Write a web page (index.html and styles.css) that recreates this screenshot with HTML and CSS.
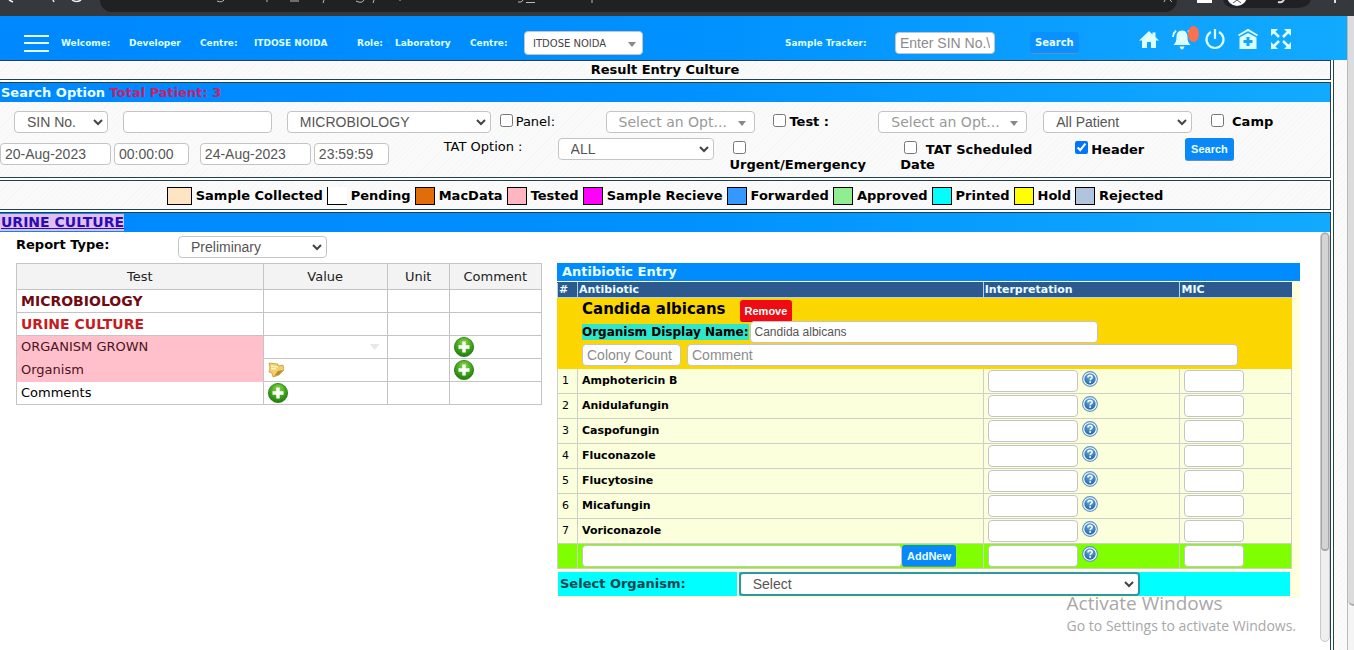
FILE: index.html
```html
<!DOCTYPE html>
<html lang="en">
<head>
<meta charset="utf-8">
<title>Result Entry Culture</title>
<link rel="stylesheet" href="styles.css">
</head>
<body>
<svg class="defs" aria-hidden="true">
  <defs>
    <radialGradient id="gGreen" cx=".5" cy=".3" r=".75"><stop offset="0" stop-color="#8fdc4a"/><stop offset=".5" stop-color="#43a81c"/><stop offset="1" stop-color="#1c7508"/></radialGradient>
    <radialGradient id="gBlue" cx=".5" cy=".25" r=".8"><stop offset="0" stop-color="#6fb0e4"/><stop offset="1" stop-color="#1b5f9e"/></radialGradient>
  </defs>
  <symbol id="add" viewBox="0 0 20 20"><circle cx="10" cy="10" r="9.6" fill="url(#gGreen)" stroke="#1f7a10" stroke-width=".8"/><path d="M8.3 4.5h3.4v3.8h3.8v3.4h-3.8v3.8H8.3v-3.8H4.5V8.300h3.800z" fill="#fff"/></symbol>
  <symbol id="help" viewBox="0 0 16 16"><circle cx="8" cy="8" r="7.400" fill="#fff" stroke="#5b93c4" stroke-width="1.100"/><circle cx="8" cy="8" r="5.700" fill="url(#gBlue)"/><path d="M5.900 6.400c0-2.600 4.300-2.600 4.300-.2 0 1.500-2 1.500-2 3" fill="none" stroke="#fff" stroke-width="1.500"/><rect x="7.300" y="10.200" width="1.700" height="1.600" fill="#fff"/></symbol>
  <symbol id="note" viewBox="0 0 16 16"><path d="M1 1l9 1v2l5-1 1 5-5 5-6 2-1-4-3-1 1-4z" fill="#f3cf6b" stroke="#c79a35" stroke-width=".8"/><path d="M3 4l7 1M3 6.500l5 .5" stroke="#fff3c4" stroke-width="1.400"/><path d="M15 8l-5 1-4 5 5-1.500z" fill="#b88a35"/></symbol>
</svg>

<div class="browser">
  <svg class="browser-left" viewBox="0 0 100 16" aria-hidden="true"><path d="M9 0l4 2M53 0l1 2M72 0q4 3 9 0" stroke="#eee" stroke-width="1.500" fill="none"/></svg>
  <div class="address">
    <svg viewBox="0 0 560 16" width="560" height="16" aria-hidden="true"><path d="M117 1q5 2 7-1M167 0v2M190 1h9M224 0l-1 3M256 1q6 3 8-1M274 0l-1 3M300 0v1M418 2q4 1 5-2M426 2.500h9M492 0v3" stroke="#bbb" stroke-width="1" fill="none"/></svg>
    <svg class="star" viewBox="0 0 16 16" width="16" height="16" aria-hidden="true"><path d="M4 0l-1 2M9 0l2 2" stroke="#bbb"/></svg>
  </div>
  <svg class="browser-right" viewBox="0 0 177 16" aria-hidden="true"><path d="M20 0h15v3H20z" fill="#fff"/><path d="M46 0h88q-3 8-14 8H58q-10 0-12-8z" fill="#202124"/><circle cx="60" cy="-4" r="10" fill="#fff"/><path d="M56 3l4-3 4 3" stroke="#555" fill="none"/><path d="M101 2q4 1 6-2M158 0v3" stroke="#ddd" stroke-width="2" fill="none"/></svg>
</div>

<div class="viewport">
<div class="page">
  <header class="topbar">
    <button class="menu" aria-label="Menu"><span></span><span></span><span></span></button>
    <span>Welcome:</span><span>Developer</span><span>Centre:</span><span>ITDOSE NOIDA</span><span>Role:</span><span>Laboratory</span>
    <label for="centre">Centre:</label>
    <div><select id="centre" class="chosen chosen-small"><option>ITDOSE NOIDA</option></select></div>
    <label for="tracker">Sample Tracker:</label>
    <div><input id="tracker" class="field tracker" type="text" placeholder="Enter SIN No.\Barcode"></div>
    <div><button class="btn btn-top">Search</button></div>
    <nav class="icons">
      <a href="#" aria-label="Home"><svg viewBox="0 0 22 22"><path d="M11 3L1 12.500h3V20h5v-6h4v6h5v-7.500h3L17.500 9V4.500h-3v2z" fill="currentColor"/></svg></a>
      <a href="#" class="bell" aria-label="Notifications"><svg viewBox="0 0 22 22"><path d="M11 2.500c-4 0-5.500 3-5.500 6.500 0 4-1 6-3 8h17c-2-2-3-4-3-8 0-3.500-1.500-6.500-5.500-6.500zM8.500 18.500h5q-1 3-2.500 3t-2.500-3z" fill="currentColor"/><path d="M2 9q.2-4 3-6.500M20 9q-.2-4-3-6.500" stroke="currentColor" stroke-width="1.800" fill="none"/></svg><i class="badge"></i></a>
      <a href="#" aria-label="Log out"><svg viewBox="0 0 22 22"><path d="M7 4a8.500 8.500 0 1 0 8 0M11 1v10" stroke="currentColor" stroke-width="2.200" fill="none"/></svg></a>
      <a href="#" aria-label="Hospital"><svg viewBox="0 0 22 22"><path d="M1.500 7.500L11 2l9.500 5.500" stroke="currentColor" stroke-width="2" fill="none"/><path fill-rule="evenodd" d="M2.500 9.500L11 5l8.500 4.500V21h-17zM9.500 9v3h-3v3h3v3h3v-3h3v-3h-3V9z" fill="currentColor"/></svg></a>
      <a href="#" aria-label="Full screen"><svg viewBox="0 0 22 22"><path d="M4 4l5 5M18 4l-5 5M4 18l5-5M18 18l-5-5" stroke="currentColor" stroke-width="2.600"/><path d="M1 1h7L1 8zM21 1h-7l7 7zM1 21h7l-7-7zM21 21h-7l7-7z" fill="currentColor"/></svg></a>
    </nav>
  </header>

  <main class="content">
    <h1 class="box title">Result Entry Culture</h1>

    <section class="box search">
      <h2 class="bar">Search Option <span class="total">Total Patient: 3</span></h2>
      <div class="row row-one">
        <div><select class="field w-sin" aria-label="Search by"><option>SIN No.</option></select></div>
        <div><input class="field w-mid" type="text" aria-label="Search value"></div>
        <div><select class="field w-dept" aria-label="Department"><option>MICROBIOLOGY</option></select></div>
        <label class="check plain"><input type="checkbox">Panel:</label>
        <div><select class="chosen" aria-label="Panel"><option>Select an Opt...</option></select></div>
        <label class="check"><input type="checkbox">Test :</label>
        <div><select class="chosen" aria-label="Test"><option>Select an Opt...</option></select></div>
        <div><select class="field w-mid" aria-label="Patient"><option>All Patient</option></select></div>
        <label class="check spaced"><input type="checkbox">Camp</label>
      </div>
      <div class="row row-two">
        <div class="dates">
          <input class="field w-date" type="text" value="20-Aug-2023" aria-label="From date"><input class="field w-time" type="text" value="00:00:00" aria-label="From time">
        </div>
        <div class="dates">
          <input class="field w-date" type="text" value="24-Aug-2023" aria-label="To date"><input class="field w-time" type="text" value="23:59:59" aria-label="To time">
        </div>
        <label class="tat" for="tat">TAT Option :</label>
        <div><select id="tat" class="field w-tat"><option>ALL</option></select></div>
        <label class="wrapcheck urgent"><input type="checkbox"><br>Urgent/Emergency</label>
        <label class="wrapcheck tatdate"><input type="checkbox"> TAT Scheduled Date</label>
        <label class="wrapcheck"><input type="checkbox" checked>Header</label>
        <div><button class="btn">Search</button></div>
      </div>
    </section>

    <ul class="box legend">
      <li><i class="sw wide c-collected"></i>Sample Collected</li>
      <li><i class="sw c-pending"></i>Pending</li>
      <li><i class="sw c-mac"></i>MacData</li>
      <li><i class="sw c-tested"></i>Tested</li>
      <li><i class="sw c-receive"></i>Sample Recieve</li>
      <li><i class="sw c-forward"></i>Forwarded</li>
      <li><i class="sw c-approved"></i>Approved</li>
      <li><i class="sw c-printed"></i>Printed</li>
      <li><i class="sw c-hold"></i>Hold</li>
      <li><i class="sw c-rejected"></i>Rejected</li>
    </ul>

    <section class="box results">
      <h2 class="bar"><a href="#" class="culture">URINE CULTURE</a></h2>
      <div class="scroller">
        <div class="panes">
          <div class="left">
            <div class="report"><label for="report">Report Type:</label><select id="report" class="field w-mid"><option>Preliminary</option></select></div>
            <table class="tests">
              <colgroup><col class="t1"><col class="t2"><col class="t3"><col class="t4"></colgroup>
              <thead><tr><th>Test</th><th>Value</th><th>Unit</th><th>Comment</th></tr></thead>
              <tbody>
                <tr><td class="dept">MICROBIOLOGY</td><td></td><td></td><td></td></tr>
                <tr><td class="group">URINE CULTURE</td><td></td><td></td><td></td></tr>
                <tr><td class="pink">ORGANISM GROWN</td><td class="drop"><i></i></td><td></td><td><svg class="add"><use href="#add"/></svg></td></tr>
                <tr><td class="pink">Organism</td><td><svg class="note"><use href="#note"/></svg></td><td></td><td><svg class="add"><use href="#add"/></svg></td></tr>
                <tr><td>Comments</td><td><svg class="add"><use href="#add"/></svg></td><td></td><td></td></tr>
              </tbody>
            </table>
          </div>
          <div class="right">
            <h3 class="bar antibar">Antibiotic Entry</h3>
            <div class="entry">
              <table class="anti">
                <colgroup><col class="a1"><col class="a2"><col class="a3"><col class="a4"></colgroup>
                <thead><tr><th>#</th><th>Antibiotic</th><th>Interpretation</th><th>MIC</th></tr></thead>
                <tbody>
                  <tr class="gold"><td></td><td colspan="3">
                    <div class="org"><span>Candida albicans</span><button class="btn remove">Remove</button></div>
                    <div class="org second"><label class="disp" for="disp">Organism Display Name:</label><input id="disp" class="field name" type="text" value="Candida albicans"></div>
                    <div class="org gap"><input class="field colony" type="text" placeholder="Colony Count" aria-label="Colony Count"><input class="field comment" type="text" placeholder="Comment" aria-label="Comment"></div>
                  </td></tr>
                  <tr><td>1</td><th>Amphotericin B</th><td><div class="cell"><input class="field interp" aria-label="Interpretation"><svg class="help"><use href="#help"/></svg></div></td><td><input class="field mic" aria-label="MIC"></td></tr>
                  <tr><td>2</td><th>Anidulafungin</th><td><div class="cell"><input class="field interp" aria-label="Interpretation"><svg class="help"><use href="#help"/></svg></div></td><td><input class="field mic" aria-label="MIC"></td></tr>
                  <tr><td>3</td><th>Caspofungin</th><td><div class="cell"><input class="field interp" aria-label="Interpretation"><svg class="help"><use href="#help"/></svg></div></td><td><input class="field mic" aria-label="MIC"></td></tr>
                  <tr><td>4</td><th>Fluconazole</th><td><div class="cell"><input class="field interp" aria-label="Interpretation"><svg class="help"><use href="#help"/></svg></div></td><td><input class="field mic" aria-label="MIC"></td></tr>
                  <tr><td>5</td><th>Flucytosine</th><td><div class="cell"><input class="field interp" aria-label="Interpretation"><svg class="help"><use href="#help"/></svg></div></td><td><input class="field mic" aria-label="MIC"></td></tr>
                  <tr><td>6</td><th>Micafungin</th><td><div class="cell"><input class="field interp" aria-label="Interpretation"><svg class="help"><use href="#help"/></svg></div></td><td><input class="field mic" aria-label="MIC"></td></tr>
                  <tr><td>7</td><th>Voriconazole</th><td><div class="cell"><input class="field interp" aria-label="Interpretation"><svg class="help"><use href="#help"/></svg></div></td><td><input class="field mic" aria-label="MIC"></td></tr>
                  <tr class="green"><td></td><td><div class="cell"><input class="field newname" aria-label="New antibiotic"><button class="btn addnew">AddNew</button></div></td><td><div class="cell"><input class="field interp" aria-label="Interpretation"><svg class="help"><use href="#help"/></svg></div></td><td><input class="field mic" aria-label="MIC"></td></tr>
                </tbody>
              </table>
              <div class="select-org"><label for="organism">Select Organism:</label><div><select id="organism" class="field"><option>Select</option></select></div></div>
            </div>
          </div>
        </div>
        <div class="innerbar"><i></i></div>
      </div>
    </section>
  </main>
</div>
<div class="pagebar"><i></i></div>
</div>
<aside class="watermark"><strong>Activate Windows</strong><span>Go to Settings to activate Windows.</span></aside>
</body>
</html>
```
FILE: styles.css
```css
* { box-sizing: border-box; }
html, body { height: 100%; }
body {
  margin: 0;
  display: flex;
  flex-direction: column;
  overflow: hidden;
  position: relative;
  font: 13px/16px "DejaVu Sans", Verdana, sans-serif;
  color: #000;
  background: #fff;
}
h1, h2, h3, ul { margin: 0; padding: 0; font-size: 13px; }
i { display: block; font-style: normal; }
svg { display: block; }
.defs { position: absolute; width: 0; height: 0; }

/* browser chrome */
.browser { display: flex; height: 16px; background: #35393d; flex: none; overflow: hidden; }
.browser-left { width: 100px; height: 16px; }
.browser-right { width: 177px; height: 16px; }
.address { flex: 1; display: flex; justify-content: space-between; height: 12px; background: #202123; border-radius: 0 0 14px 14px; overflow: hidden; }

/* page frame */
.viewport { flex: 1; display: flex; min-height: 0; }
.page {
  flex: 1;
  min-width: 0;
  display: flex;
  flex-direction: column;
  background: repeating-linear-gradient(135deg, #fafafa 0 3px, #f6f7f7 3px 4px);
}
.pagebar { width: 7px; flex: none; background: #f4f4f4; border-left: 1px solid #b9b9b9; }
.pagebar i { height: 93%; background: #dcdcdc; border-radius: 0 0 0 6px; border-bottom: 2px solid #aaa; }

.topbar {
  flex: none;
  height: 44px;
  padding: 10px 0 0 24px;
  display: grid;
  grid-template-columns: 37fr 68fr 71fr 54fr 103fr 38fr 75fr 54fr 261fr 110fr 135fr 108fr 209fr;
  align-items: center;
  color: #dcffff;
  font-weight: bold;
  font-size: 9px;
  line-height: 14px;
  white-space: nowrap;
  background: linear-gradient(90deg, #0088ff 0%, #0090ff 50%, #12aaff 100%);
}
.topbar > * { min-width: 0; }
.menu { width: 25px; height: 17px; padding: 0; border: 0; background: none; display: flex; flex-direction: column; justify-content: space-between; }
.menu span { height: 2px; background: #e4ffff; }
.icons { display: flex; gap: 11px; padding-bottom: 8px; }
.icons a { color: #dcffff; position: relative; }
.icons svg { width: 22px; height: 22px; }
.badge { position: absolute; right: -6px; top: -2px; width: 11px; height: 16px; border-radius: 50%; background: #f9714f; }

.content {
  flex: 1;
  min-height: 0;
  margin-right: 13px;
  padding-right: 2px;
  border-right: 1px solid #1d4d33;
  background: #fff;
  display: flex;
  flex-direction: column;
  gap: 2px;
}
.box {
  border: solid #23404c;
  border-width: 1px 1px 1px 0;
  background: repeating-linear-gradient(135deg, #fafafa 0 3px, #f6f7f7 3px 4px);
}
.title { text-align: center; height: 20px; line-height: 18px; flex: none; }
.bar { height: 19px; line-height: 19px; padding-left: 1px; color: #e8ffff; background: linear-gradient(90deg, #0088ff 0%, #0090ff 50%, #12aaff 100%); }
.total { color: #c8206c; font-weight: bold; }

/* controls */
.field, .chosen {
  font: 14px "Liberation Sans", Arial, sans-serif;
  color: #555;
  height: 22px;
  border: 1px solid #c4c4c4;
  border-radius: 4px;
  background-color: #fff;
  padding: 0 4px;
  display: block;
}
select.field, .chosen {
  appearance: none;
  padding: 0 20px 0 12px;
  background-repeat: no-repeat;
  background-position: right 4px center;
  background-image: url("data:image/svg+xml,%3Csvg xmlns='http://www.w3.org/2000/svg' width='10' height='8'%3E%3Cpath d='M1 2l4 4 4-4' fill='none' stroke='%23444' stroke-width='2'/%3E%3C/svg%3E");
}
.chosen {
  width: 149px;
  font: 14px "DejaVu Sans", Verdana, sans-serif;
  color: #999;
  background-position: right 7px center;
  background-image: url("data:image/svg+xml,%3Csvg xmlns='http://www.w3.org/2000/svg' width='10' height='7'%3E%3Cpath d='M1 2h8L5 7z' fill='%23888'/%3E%3C/svg%3E");
}
.chosen-small { width: 119px; height: 24px; font-size: 10px; color: #444; padding: 0 0 0 8px; background-position: right 5px center; }
.field::placeholder { color: #8c8c8c; opacity: 1; }
.tracker { width: 100px; }
.w-sin { width: 94px; }
.w-mid { width: 149px; }
.w-dept { width: 204px; }
.w-date { width: 111px; }
.w-time { width: 75px; }
.w-tat { width: 156px; }
.btn {
  font: bold 11px "Liberation Sans", Arial, sans-serif;
  color: #e8ffff;
  background: #0a88f8;
  border: 0;
  border-bottom: 1px solid #6a8fb0;
  border-radius: 3px;
  padding: 0 5px;
  height: 22px;
}
.btn-top { font: bold 10px "DejaVu Sans", sans-serif; background: #0a90ff; }

/* search panel */
.search { flex: none; height: 96px; }
.row { display: grid; }
.row > * { min-width: 0; }
.row-one { grid-template-columns: 109fr 164fr 213fr 106fr 168fr 105fr 165fr 168fr 119fr; padding: 9px 0 0 14px; height: 36px; }
.row-two { grid-template-columns: 200fr 244fr 114fr 172fr 171fr 175fr 110fr 145fr; }
.row-two .btn { height: 23px; padding: 0 6px; }
.dates { display: flex; gap: 3px; padding-top: 5px; }
.check, .wrapcheck { font-weight: bold; }
.plain { font-weight: normal; }
.check { display: flex; gap: 3px; line-height: 22px; }
.spaced { gap: 8px; }
input[type="checkbox"] { width: 13px; height: 13px; margin: 3px 0 0; }
.wrapcheck { line-height: 15px; }
.wrapcheck input { vertical-align: 0; margin-right: 3px; }
.urgent input { margin-left: 4px; }
.tatdate { padding-right: 24px; }
.tatdate input { margin: 3px 4px 0; }
.tat { line-height: 18px; }

.legend { flex: none; height: 30px; display: flex; justify-content: center; align-items: center; gap: 4px; padding-top: 2px; list-style: none; font-weight: bold; }
.legend li { display: flex; align-items: center; gap: 4px; white-space: nowrap; }
.sw { width: 20px; height: 18px; border: 1px solid #000; }
.wide { width: 25px; }
.c-collected { background: #ffe4c4; }
.c-pending { background: #fff; border-width: 0 0 1px 1px; }
.c-mac { background: #e06c0a; }
.c-tested { background: #ffb6c1; }
.c-receive { background: #f0f; }
.c-forward { background: #3399ff; }
.c-approved { background: #90ee90; }
.c-printed { background: #0ff; }
.c-hold { background: #ff0; }
.c-rejected { background: #b0c4de; }

/* results */
.results { flex: 1; min-height: 0; display: flex; flex-direction: column; border-bottom: 0; background: #fff; }
.culture { display: inline-block; margin-left: -1px; padding-left: 1px; font-size: 14px; line-height: 17px; color: #2a0cb4; background: #e0bff0; }
.results .bar { flex: none; }
.scroller { flex: 1; min-height: 0; display: flex; }
.panes { flex: 1; min-width: 0; display: grid; grid-template-columns: 526fr 743fr; gap: 15px; padding: 4px 20px 0 16px; align-items: start; }
.innerbar { width: 10px; flex: none; margin-bottom: 8px; background: #efefef; border: 1px solid #c8c8c8; border-radius: 5px; }
.innerbar i { height: 78%; background: #d4d4d4; border-radius: 5px; border: solid #a6a6a6; border-width: 1px 1px 2px; }
.report { display: grid; grid-template-columns: 162fr 364fr; font-weight: bold; line-height: 18px; height: 27px; }
table { border-collapse: collapse; width: 100%; table-layout: fixed; }
.tests td, .tests th { border: 1px solid #c4c4c4; padding: 0 4px; height: 23px; }
.tests th { font-weight: normal; background: #f3f3f3; color: #222; height: 26px; }
.t1 { width: 47%; } .t2 { width: 23.600%; } .t3 { width: 11.800%; } .t4 { width: 17.600%; }
.tests .dept { color: #700a12; font-weight: bold; font-size: 14px; }
.tests .group { color: #c41c20; font-weight: bold; font-size: 14px; }
.tests .pink { background: #ffc0cb; color: #4a1420; border-color: #ffc0cb #c4c4c4; }
.tests .drop { padding-right: 7px; }
.drop i { margin-left: auto; width: 10px; height: 6px; background: #e8e8e8; clip-path: polygon(0 0, 100% 0, 50% 100%); }
.add { width: 20px; height: 20px; }
.note { width: 16px; height: 16px; }

.right { padding-top: 27px; }
.antibar { height: 18px; line-height: 18px; padding-left: 5px; background: #008cff; }
.entry { background: #ffffe0; padding: 1px 8px 2px 0; }
.anti { font-size: 11px; }
.anti th, .anti td { border: 1px solid #ccd0c8; padding: 0 4px; height: 25px; text-align: left; line-height: 14px; }
.anti thead th { height: 15px; color: #e8ffff; background: #2c5a8e; border-color: #b8cfe0; border-top-color: #2c5a8e; padding: 0 1px; }
.anti thead th:last-child { border-right-color: #2c5a8e; }
.anti tbody tr { background: #fbffdc; }
.a1 { width: 20px; } .a3 { width: 26.800%; } .a4 { width: 15.200%; }
.anti .gold { background: #fcd600; }
.anti .gold td { border-color: #fcd600; padding-bottom: 1px; }
.org { display: flex; align-items: center; height: 22px; }
.org span { font-size: 15px; font-weight: bold; margin-right: 14px; }
.second { height: 23px; align-items: end; }
.gap { gap: 6px; height: 24px; }
.remove { background: #f00a14; border-bottom-color: #c00; margin-top: 4px; }
.disp { font-size: 12px; font-weight: bold; line-height: 16px; margin-bottom: 3px; background: #2ee6cc; margin-right: 1px; }
.name { width: 348px; font-size: 12px; }
.colony { width: 99px; }
.comment { width: 551px; }
.cell { display: flex; gap: 4px; align-items: center; }
.interp { width: 90px; }
.mic { width: 60px; }
.help { width: 16px; height: 16px; margin-bottom: 5px; }
.anti .green { background: #80ff00; }
.green .cell { gap: 0; }
.green .interp { margin-right: 4px; }
.newname { width: 320px; }
.select-org { display: grid; grid-template-columns: 179fr 552fr; gap: 2px; padding: 3px 2px 0 1px; font-weight: bold; }
.select-org label { background: #0ff; line-height: 24px; padding-left: 2px; color: #064650; }
.select-org div { background: #0ff; height: 24px; }
.select-org select { width: 72.800%; height: 24px; border: 2px solid #2a98a8; }

.watermark { position: absolute; right: 58px; bottom: 14px; display: grid; gap: 2px; font-family: "Open Sans", "Noto Sans", sans-serif; color: #a8a8a8; pointer-events: none; }
.watermark strong { font-weight: 400; font-size: 19px; line-height: 22px; }
.watermark span { font-size: 14px; line-height: 20px; }
```
